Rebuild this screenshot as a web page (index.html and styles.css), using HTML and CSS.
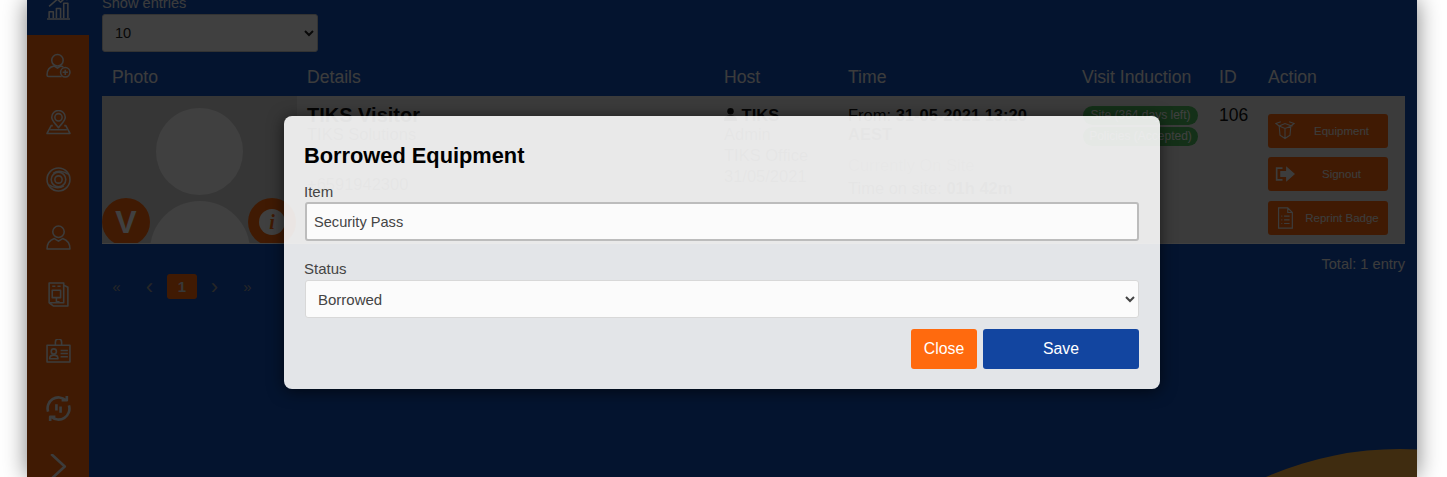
FILE: index.html
```html
<!doctype html>
<html lang="en">
  <head>
    <meta charset="utf-8">
    <title>Visitors - Borrowed Equipment</title>
    <link rel="stylesheet" href="styles.css">
  </head>

  <body>
    <div class="frame">
      <div class="arc"></div>

      <nav class="sidebar">
        <a class="nav-top">
          <svg class="icon" viewBox="0 0 24 24"><path d="M1 23h22M3 22v-6h4v6M10 22v-9h4v9M17 22V8h4v14M3 11 11 4l3 3 6-6M16 1h4v4"/></svg>
        </a>
        <a class="nav-item">
          <svg class="icon" viewBox="0 0 24 24"><circle cx="11" cy="7" r="5.5"/><path d="M1 21c0-6 4-8 7-8.5l3 2 3-2c1 .2 2 .5 2.500 1M1 21c0 1 .5 1.500 1.500 1.500H15"/><circle cx="18.500" cy="18.500" r="4.500"/><path d="M18.500 16v5M16 18.500h5"/></svg>
        </a>
        <a class="nav-item">
          <svg class="icon" viewBox="0 0 24 24"><path d="M12 17C9 13 5.500 10.500 5.500 7a6.500 6.500 0 0 1 13 0c0 3.500-3.500 6-6.500 10z"/><circle cx="12" cy="7" r="3.500"/><path d="M6.500 15H5L1 22.500h22L19 15h-1.500M4 19h16"/></svg>
        </a>
        <a class="nav-item">
          <svg class="icon" viewBox="0 0 24 24"><circle cx="12" cy="12" r="11"/><circle cx="12" cy="12" r="7"/><circle cx="12" cy="12" r="3.500"/><path d="M3 17c3 3 10 4 14 1M21 7c-3-3-10-4-14-1"/></svg>
        </a>
        <a class="nav-item">
          <svg class="icon" viewBox="0 0 24 24"><circle cx="12" cy="6.500" r="5.500"/><path d="M1 23c0-6 4-9 7-10l4 2.500 4-2.500c3 1 7 4 7 10z"/></svg>
        </a>
        <a class="nav-item">
          <svg class="icon" viewBox="0 0 24 24"><path d="M3 1h14v19H3zM17 3l4 2v18H7l-4-3M6 8h8v7H6zM6 4h3M11 4h3M10 15v4h3"/></svg>
        </a>
        <a class="nav-item">
          <svg class="icon" viewBox="0 0 24 24"><path d="M1 6h22v16H1zM9 6V3a3 3 0 0 1 6 0v3"/><circle cx="7.500" cy="12" r="2.500"/><path d="M3.500 19c0-2.500 2-3.500 4-3.500s4 1 4 3.500zM14 11h7M14 14h7M14 17h7"/></svg>
        </a>
        <a class="nav-item">
          <svg class="icon thick" viewBox="0 0 24 24"><path d="M2 15A10.500 10.500 0 0 1 19 4M22 9a10.500 10.500 0 0 1-17 11M15 4h5V0M9 20H4v4M10 8v6M14 10v6"/></svg>
        </a>
        <a class="nav-item">
          <svg class="icon thick" viewBox="0 0 24 24"><path d="m5 0 13 12L5 24"/></svg>
        </a>
      </nav>

      <main class="content">
        <label class="entries-label">Show entries</label>
        <select class="entries-select"><option>10</option></select>

        <div class="grid head">
          <div>Photo</div>
          <div>Details</div>
          <div>Host</div>
          <div>Time</div>
          <div>Visit Induction</div>
          <div>ID</div>
          <div>Action</div>
        </div>

        <div class="grid row">
          <div class="photo">
            <div class="avatar-head"></div>
            <div class="avatar-body"></div>
            <span class="badge badge-left">V</span>
            <span class="badge badge-right"><i class="info">i</i></span>
          </div>
          <div class="cell">
            <div class="name">TIKS Visitor</div>
            <div class="second muted">TIKS Solutions</div>
            <div class="phone muted">+6591942300</div>
          </div>
          <div class="cell">
            <div class="bold"><svg class="person" viewBox="0 0 12 12"><circle cx="6" cy="3" r="3"/><path d="M0 12c0-4 2-5 6-5s6 1 6 5z"/></svg> TIKS</div>
            <div class="second muted">Admin</div>
            <div class="host-line muted">TIKS Office</div>
            <div class="host-line muted">31/05/2021</div>
          </div>
          <div class="cell">
            <div>From: <b>31-05-2021 13:20</b></div>
            <div class="second bold muted">AEST</div>
            <div class="on-site">Currently On Site</div>
            <div class="on-time">Time on site: <b>01h 42m</b></div>
          </div>
          <div class="cell pills">
            <span class="pill">Site (364 days left)</span>
            <span class="pill">Policies (Accepted)</span>
          </div>
          <div class="cell id">106</div>
          <div class="cell actions">
            <a class="action">
              <svg class="action-icon" viewBox="0 0 24 24"><path d="M5 6 12 3l8 3-8 3zM5 6l1 11 6 4 6-4 1-11M12 9v12M5 6 1 3l6-2M19 6l4-3-6-2"/></svg>
              <span>Equipment</span>
            </a>
            <a class="action">
              <svg class="action-icon" viewBox="0 0 24 24"><path class="line" d="M9 5H2v14h7"/><path class="fill" d="M7 9h7V4l9 8-9 8v-5H7z"/></svg>
              <span>Signout</span>
            </a>
            <a class="action action-tall">
              <svg class="action-icon" viewBox="0 0 24 24"><path d="M5 1h10l5 5v17H5zM15 1v5h5M8 10h1M11 10h6M8 14h1M11 14h6M8 18h1M11 18h6"/></svg>
              <span>Reprint Badge</span>
            </a>
          </div>
        </div>

        <div class="total">Total: 1 entry</div>
        <div class="pager">
          <span>«</span>
          <span class="chevron">‹</span>
          <span class="current">1</span>
          <span class="chevron">›</span>
          <span>»</span>
        </div>
      </main>

      <div class="backdrop"></div>

      <div class="modal">
        <h2>Borrowed Equipment</h2>
        <label class="field-label">Item</label>
        <input class="field field-text" type="text" value="Security Pass">
        <label class="field-label status-label">Status</label>
        <select class="field field-select"><option>Borrowed</option></select>
        <div class="modal-buttons">
          <button class="btn btn-close">Close</button>
          <button class="btn btn-save">Save</button>
        </div>
      </div>
    </div>
  </body>
</html>
```

FILE: styles.css
```css
html, body {
  margin: 0;
  height: 477px;
  overflow: hidden;
  background: #fff;
  font-family: "Liberation Sans", Arial, sans-serif;
  font-size: 16.5px;
}

.frame {
  position: relative;
  display: flex;
  margin-left: 27px;
  width: 1390px;
  height: 477px;
  overflow: hidden;
  background: #1050bc;
  box-shadow: 0 0 22px rgba(0, 0, 0, .5);
}

.arc {
  position: absolute;
  left: 1038px;
  top: 449px;
  width: 670px;
  height: 670px;
  border-radius: 50%;
  background: #fcb040;
}

/* sidebar */
.sidebar {
  flex: 0 0 62px;
  position: relative;
  display: flex;
  flex-direction: column;
}

.nav-top {
  flex: 0 0 35px;
  min-height: 0;
  display: flex;
  justify-content: center;
  align-items: flex-end;
  padding-bottom: 15px;
  box-sizing: border-box;
}

.nav-item {
  flex: 0 0 57.3px;
  box-sizing: border-box;
  padding-top: 3px;
  display: flex;
  justify-content: center;
  align-items: center;
  background: #ff6a0e;
}

.icon {
  flex: none;
  width: 25px;
  height: 25px;
  fill: none;
  stroke: #eee;
  stroke-width: 1.5;
  stroke-linejoin: round;
}

.thick { stroke-width: 2.5; }

/* main content */
.content {
  flex: 1;
  padding: 0 12px 0 13px;
  position: relative;
  color: #eee;
}

.entries-label {
  display: block;
  margin-top: -6px;
  height: 20px;
  line-height: 18px;
  font-size: 14.6px;
}

.entries-select {
  display: block;
  width: 216px;
  height: 38px;
  padding-left: 8px;
  font: 14.6px "Liberation Sans", Arial, sans-serif;
  color: #222;
  background: #fff;
  border: 1px solid #ccc;
  border-radius: 3px;
}

.grid {
  display: grid;
  grid-template-columns: 195px 417px 124px 234px 137px 49px 147px;
}

.head {
  height: 44px;
  line-height: 50px;
  font-size: 17.6px;
}

.head > div { padding-left: 10px; }

.row {
  height: 148px;
  background: #ececec;
  color: #111;
  border-bottom: 1px solid #fff;
  box-sizing: border-box;
}

.photo {
  position: relative;
  overflow: hidden;
  background: #d8d8d8;
}

.avatar-head {
  width: 87px;
  height: 87px;
  margin: 12px auto 0;
  border-radius: 50%;
  background: #fff;
}

.avatar-body {
  width: 100px;
  height: 100px;
  margin: 6px auto 0;
  border-radius: 50%;
  background: #fff;
}

.badge {
  position: absolute;
  top: 102px;
  width: 48px;
  height: 48px;
  border-radius: 50%;
  background: #ff6a0e;
  color: #fff;
  display: flex;
  align-items: center;
  justify-content: center;
}

.badge-left {
  left: 0;
  font-size: 32px;
  font-weight: bold;
}

.badge-right { right: 1px; }

.info {
  width: 26px;
  height: 26px;
  border-radius: 50%;
  background: #fff;
  color: #ff6a0e;
  font: italic bold 20px/26px "Liberation Serif", serif;
  text-align: center;
}

.cell {
  padding: 9px 0 0 10px;
  line-height: 20px;
}

.name, .bold { font-weight: bold; }

.name { font-size: 20px; }

.second { margin-top: -1px; }

.muted { color: #666; }

.phone { margin-top: 30px; }

.person {
  width: 13px;
  height: 13px;
  fill: #111;
}

.host-line { margin-top: 1px; }

.on-site { margin-top: 11px; color: #aaa; }

.on-time { margin-top: 3px; color: #555; }

.pills {
  padding-top: 10px;
  padding-left: 11px;
  display: flex;
  flex-direction: column;
  align-items: flex-start;
  gap: 2px;
}

.pill {
  width: 115px;
  height: 19px;
  border-radius: 10px;
  background: #4fbf5f;
  color: #fff;
  font-size: 12px;
  line-height: 19px;
  text-align: center;
  white-space: nowrap;
}

.id { font-size: 17.5px; }

.actions {
  padding-top: 18px;
  display: flex;
  flex-direction: column;
  gap: 9px;
}

.action {
  display: flex;
  align-items: center;
  width: 120px;
  height: 34px;
  border-radius: 3px;
  background: #ff6a0e;
  color: #eee;
  font-size: 11.5px;
}

.action-tall { margin-top: 1px; }

.action span {
  flex: 1;
  text-align: center;
  white-space: nowrap;
}

.action-icon {
  flex: 0 0 20px;
  width: 20px;
  height: 20px;
  margin-left: 7px;
  fill: none;
  stroke: #eee;
  stroke-width: 1.3;
}

.action-icon .fill { fill: #eee; }

.action-icon .line { stroke-width: 2; }

.action-tall .action-icon {
  flex-basis: 22px;
  height: 24px;
  margin-left: 6px;
}

.total {
  margin-top: 11px;
  text-align: right;
  font-size: 14.6px;
  line-height: 18px;
}

.pager {
  display: flex;
  align-items: center;
  margin: 1px 0 0 -2px;
  font-size: 15px;
  color: #999;
  height: 25px;
}

.pager span {
  flex: 0 0 33px;
  text-align: center;
}

.pager .chevron {
  font-size: 22px;
  line-height: 22px;
}

.pager .current {
  flex: 0 0 30px;
  margin: 0 1px;
  height: 25px;
  line-height: 25px;
  border-radius: 3px;
  background: #ff6a0e;
  color: #ddd;
  font-weight: bold;
}

/* modal */
.backdrop {
  position: absolute;
  inset: 0;
  background: rgba(0, 0, 0, .75);
}

.modal {
  position: absolute;
  left: 257px;
  top: 116px;
  width: 876px;
  height: 273px;
  box-sizing: border-box;
  padding: 26px 21px 0 20px;
  border-radius: 8px;
  background: rgba(255, 255, 255, .89);
  box-shadow: 0 2px 16px rgba(0, 0, 0, .6);
  color: #444;
}

.modal h2 {
  margin: 0;
  font-size: 21.8px;
  line-height: 28px;
  color: #000;
}

.field-label {
  display: block;
  margin-top: 13px;
  font-size: 15px;
  line-height: 18px;
}

.field {
  display: block;
  width: calc(100% - 1px);
  height: 38px;
  box-sizing: border-box;
  margin: 1px 0 0 1px;
  border-radius: 3px;
  background: #fbfbfb;
  color: #444;
}

.field-text {
  height: 39px;
  padding: 0 7px;
  border: 2px solid #bcbcbc;
  font: 14.6px "Liberation Sans", Arial, sans-serif;
}

.status-label { margin-top: 19px; }

.field-select {
  margin-top: 2px;
  padding-left: 8px;
  border: 1px solid #d8d8d8;
  font: 15px "Liberation Sans", Arial, sans-serif;
}

.modal-buttons {
  display: flex;
  justify-content: flex-end;
  gap: 6px;
  margin-top: 11px;
}

.btn {
  height: 40px;
  border: 0;
  border-radius: 3px;
  color: #fff;
  font: 15.8px "Liberation Sans", Arial, sans-serif;
}

.btn-close {
  width: 66px;
  background: #ff6a0e;
}

.btn-save {
  width: 156px;
  background: #1245a0;
}
```
